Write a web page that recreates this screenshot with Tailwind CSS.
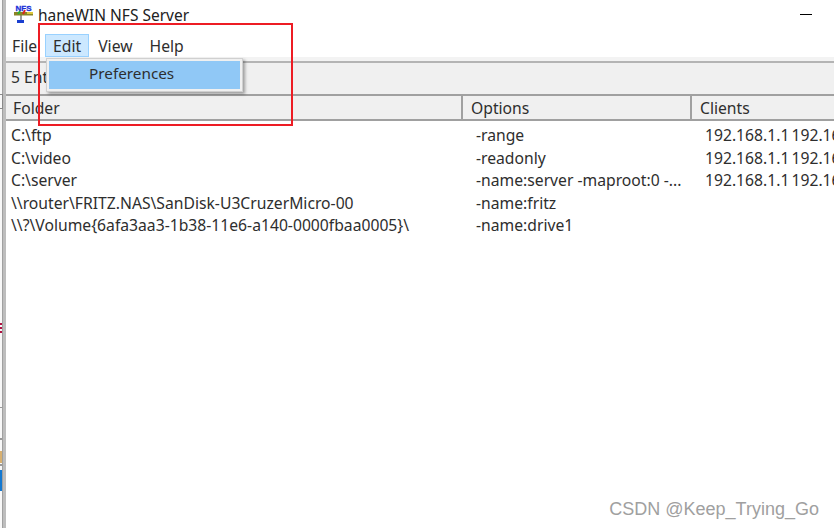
<!DOCTYPE html>
<html>
<head>
<meta charset="utf-8">
<script src="https://cdn.jsdelivr.net/npm/@tailwindcss/browser@4"></script>
</head>
<body class="m-0">
<div class="relative flex w-[834px] h-[528px] overflow-hidden bg-white text-[#2e2e2e] text-[15.7px] font-['Noto_Sans',sans-serif]">
  <!-- left edge -->
  <div class="w-[6px] shrink-0 flex bg-[#f8f8f8]">
    <div class="w-[1px] ml-[2px] bg-[#a0a0a0]"></div>
    <div class="w-[3px] bg-[#bdbdbd]"></div>
  </div>
  <div class="flex-1 flex flex-col min-w-0">
    <!-- title -->
    <div class="h-[34px] flex items-start pl-[8px] pt-[2px] relative">
      <svg width="20" height="22" viewBox="0 0 20 22" class="shrink-0">
        <text x="9.5" y="9" text-anchor="middle" font-size="8" font-weight="700" font-family="Liberation Sans" fill="#1a2fd8" stroke="#1a2fd8" stroke-width="0.3">NFS</text>
        <path d="M7 13v5" stroke="#999" stroke-width="2"/>
        <rect x="0" y="10" width="19" height="3.5" fill="#8a8424"/>
        <rect x="13" y="10" width="6" height="2" fill="#dcc83c"/>
        <path d="M9 12l2-4" stroke="#e02020" stroke-width="1.8"/>
        <path d="M4 12l2-3" stroke="#28b038" stroke-width="1.8"/>
        <rect x="3" y="18" width="7" height="3" fill="#1a3fd0"/>
      </svg>
      <span class="ml-[4px] mt-[2px] leading-[22px] text-[15.5px] text-[#222]">haneWIN NFS Server</span>
      <div class="absolute right-[22px] top-[14px] w-[12px] h-[1px] bg-black"></div>
    </div>
    <!-- menu -->
    <div class="h-[23px] flex items-center pl-[1px]">
      <span class="pl-[5px] pr-[4px] h-[23px] leading-[25px]">File</span>
      <span class="ml-[4px] px-[7px] h-[23px] leading-[23px] bg-[#cce8ff] border border-[#99d1ff]">Edit</span>
      <span class="ml-[1px] px-[8px] h-[23px] leading-[25px]">View</span>
      <span class="ml-[1px] px-[8px] h-[23px] leading-[25px]">Help</span>
    </div>
    <!-- status -->
    <div class="h-[37px] bg-[#f3f3f3] pt-[4px]">
      <div class="h-[33px] bg-[#f0f0f0] border-t-[2px] border-[#b4b4b4] flex items-center pl-[5px] pb-[2px]">5 Entries</div>
    </div>
    <!-- header -->
    <div class="h-[27px] flex bg-[#f0f0f0] border-y-[2px] border-[#a0a0a0]">
      <div class="w-[457px] shrink-0 pl-[7px] leading-[25px] border-r-[2px] border-[#a0a0a0]">Folder</div>
      <div class="w-[229px] shrink-0 pl-[8px] leading-[25px] border-r-[2px] border-[#a0a0a0]">Options</div>
      <div class="flex-1 pl-[8px] leading-[25px]">Clients</div>
    </div>
    <!-- rows -->
    <div class="flex flex-col pt-[3px] leading-[22.5px] whitespace-nowrap">
      <div class="flex"><div class="w-[470px] shrink-0 pl-[5px]">C:\ftp</div><div class="w-[229px] shrink-0">-range</div><div class="w-[129px] overflow-hidden [word-spacing:-2px]">192.168.1.1 192.168.1.2</div></div>
      <div class="flex"><div class="w-[470px] shrink-0 pl-[5px]">C:\video</div><div class="w-[229px] shrink-0">-readonly</div><div class="w-[129px] overflow-hidden [word-spacing:-2px]">192.168.1.1 192.168.1.2</div></div>
      <div class="flex"><div class="w-[470px] shrink-0 pl-[5px]">C:\server</div><div class="w-[229px] shrink-0">-name:server -maproot:0 -...</div><div class="w-[129px] overflow-hidden [word-spacing:-2px]">192.168.1.1 192.168.1.2</div></div>
      <div class="flex"><div class="w-[470px] shrink-0 pl-[5px]">\\router\FRITZ.NAS\SanDisk-U3CruzerMicro-00</div><div class="w-[229px] shrink-0">-name:fritz</div></div>
      <div class="flex"><div class="w-[470px] shrink-0 pl-[5px]">\\?\Volume{6afa3aa3-1b38-11e6-a140-0000fbaa0005}\</div><div class="w-[229px] shrink-0">-name:drive1</div></div>
    </div>
  </div>
  <!-- popup menu -->
  <div class="absolute left-[46px] top-[58px] w-[197px] h-[34px] bg-[#f0f0f0] border border-[#d0d0d0] p-[2px] shadow-[2px_2px_3px_rgba(0,0,0,0.35)]">
    <div class="h-[28px] bg-[#90c8f6] pl-[40px] leading-[25px] text-[15.3px]">Preferences</div>
  </div>
  <!-- desktop fragments behind the window edge -->
  <div class="absolute left-0 top-[94px] w-[3px] h-[15px] border-y border-r border-[#888]"></div>
  <div class="absolute left-0 top-[323px] w-[2px] h-[2px] bg-[#b01040]"></div>
  <div class="absolute left-0 top-[327px] w-[2px] h-[2px] bg-[#b01040]"></div>
  <div class="absolute left-0 top-[331px] w-[2px] h-[2px] bg-[#b01040]"></div>
  <div class="absolute left-0 top-[407px] w-[2px] h-[1px] bg-[#999]"></div>
  <div class="absolute left-0 top-[438px] w-[2px] h-[2px] bg-[#999]"></div>
  <div class="absolute left-0 top-[451px] w-[2px] h-[12px] bg-[#d8b070]"></div>
  <div class="absolute left-0 top-[464px] w-[2px] h-[2px] bg-[#999]"></div>
  <div class="absolute left-0 top-[470px] w-[2px] h-[21px] bg-[#1478d0]"></div>
  <!-- red annotation -->
  <div class="absolute left-[38px] top-[23px] w-[255px] h-[103px] border-[2px] border-[#ed1c24]"></div>
  <!-- watermark -->
  <div class="absolute right-[15px] top-[497px] text-[18px] leading-[24px] text-[#a0a0a0] font-['Liberation_Sans',sans-serif]">CSDN @Keep_Trying_Go</div>
</div>
</body>
</html>
